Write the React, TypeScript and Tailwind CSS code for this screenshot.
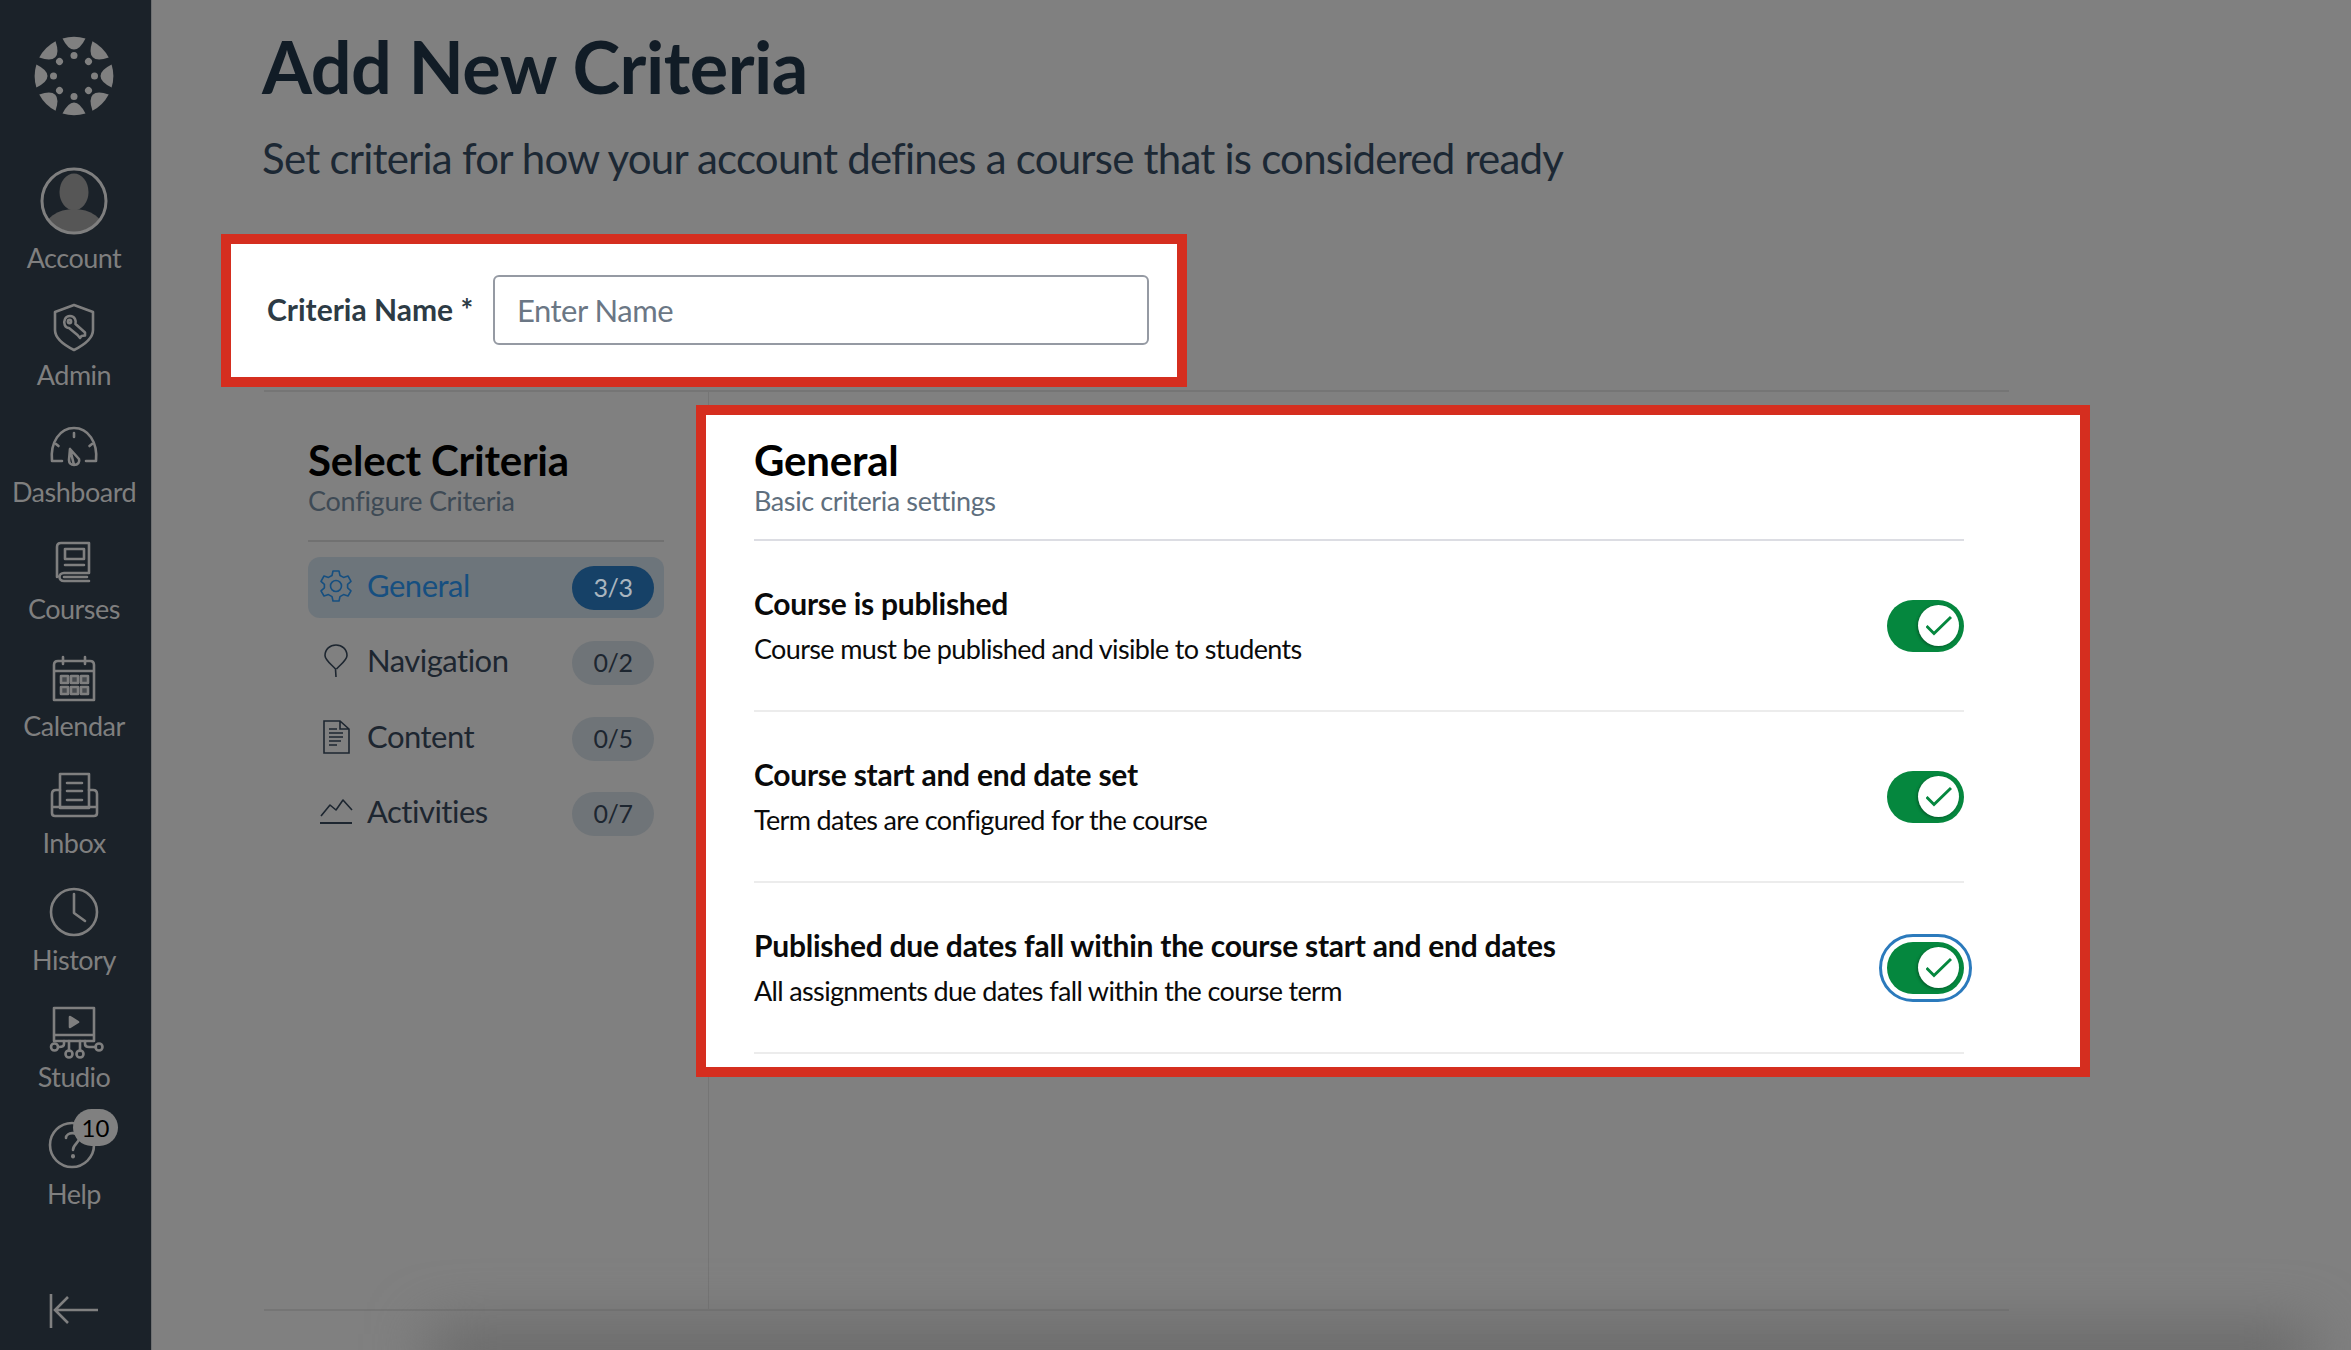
import type { ReactNode } from "react";

const Icon = ({ children, size = 64 }: { children: ReactNode; size?: number }) => (
  <svg width={size} height={size} viewBox="0 0 64 64" fill="none" stroke="#7f7f7f" strokeWidth="2.6" strokeLinejoin="round" strokeLinecap="round">
    {children}
  </svg>
);

const Logo = () => (
  <svg width="80" height="80" viewBox="-40 -40 80 80" fill="#808080">
    {[0, 45, 90, 135, 180, 225, 270, 315].map((a) => (
      <g key={a} transform={`rotate(${a})`}>
        <path d="M-11.5 -37.6 A 39 39 0 0 1 11.5 -37.6 Q 6 -26.5 0 -26.5 Q -6 -26.5 -11.5 -37.6 Z" />
        <circle cx="0" cy="-20.5" r="3.5" />
      </g>
    ))}
  </svg>
);

const AccountIcon = () => (
  <svg width="68" height="68" viewBox="0 0 68 68" className="-translate-y-[9px]">
    <defs>
      <clipPath id="avatar">
        <circle cx="34" cy="34" r="31" />
      </clipPath>
    </defs>
    <g clipPath="url(#avatar)" fill="#565656">
      <ellipse cx="34" cy="25" rx="14.5" ry="18.5" />
      <ellipse cx="34" cy="63" rx="30" ry="21" />
    </g>
    <circle cx="34" cy="34" r="32" fill="none" stroke="#7f7f7f" strokeWidth="3" />
  </svg>
);

const AdminIcon = () => (
  <Icon>
    <path d="M32 10 L51 17 V35 C51 44 42 50 32 55 C22 50 13 44 13 35 V17 Z" />
    <path d="M23 24 C25 20 31 20 33 24 C34 26 34 27 33.5 29 L43 37.5 L43 40.5 L39.5 41 L38 43 L35.5 40 L27 33 C23 33 21 28 23 24 Z" />
    <circle cx="27.5" cy="26.5" r="1.6" />
  </Icon>
);

const DashboardIcon = () => (
  <Icon>
    <path d="M20 49 H10 C8 30 18 16 32 16 C46 16 56 30 54 49 H44" />
    <path d="M14 32 L16.5 34 M50 32 L47.5 34 M32 21 V25" />
    <path d="M28 37 L32 53 C29 53 27 51 27 48 Z M28 37 L37 47 C38 50 36 53 32 53" />
  </Icon>
);

const CoursesIcon = () => (
  <Icon>
    <path d="M19 14 H47 V44 H22 C16 44 16 52 22 52 H47 M19 14 C16 14 15 16 15 18 V48" />
    <path d="M23 20 H42 V30 H23 Z M23 36 H42 M22 48 H45" />
  </Icon>
);

const CalendarIcon = () => (
  <Icon>
    <path d="M12 54 V19 C12 16 14 15 16 15 H48 C50 15 52 16 52 19 V54 Z M12 25 H52 M21 11 V18 M43 11 V18" />
    <path d="M19 30 H26 V37 H19 Z M29 30 H36 V37 H29 Z M39 30 H46 V37 H39 Z M19 41 H26 V48 H19 Z M29 41 H36 V48 H29 Z M39 41 H46 V48 H39 Z" fill="#7f7f7f" fillOpacity="0.45" />
  </Icon>
);

const InboxIcon = () => (
  <Icon>
    <path d="M18 11 H47 V45 H18 Z M25 20 H40 M25 28 H40 M25 37 H40" />
    <path d="M18 27 H14 C11 27 10 29 10 31 V50 C10 52 11 53 13 53 H52 C54 53 55 52 55 50 V31 C55 29 54 27 51 27 H47 M10 44 H55" />
  </Icon>
);

const HistoryIcon = () => (
  <Icon>
    <circle cx="32" cy="32" r="23" />
    <path d="M32 14 V33 L43 41" />
  </Icon>
);

const StudioIcon = () => (
  <Icon>
    <path d="M12 11 H52 V44 H12 Z M12 38 H52" />
    <path d="M28 20 L36 25 L28 30 Z" fill="#7f7f7f" />
    <path d="M22 44 V47 C22 49 20 50 17 50 M54 50 H47 C44 50 43 49 43 47 V44 M27 44 V54 M38 44 V54" />
    <circle cx="12.5" cy="50" r="3.5" />
    <circle cx="57" cy="50" r="3.5" />
    <circle cx="27" cy="57" r="3.5" />
    <circle cx="38" cy="57" r="3.5" />
  </Icon>
);

const HelpIcon = () => (
  <Icon>
    <circle cx="30" cy="31" r="22" />
    <path d="M24 24 C24 18 36 17 37 24 C37.5 29 31 30 31 36" />
    <path d="M31 42 V42.5" strokeWidth="4" />
  </Icon>
);

const GearIcon = () => (
  <svg width="34" height="34" viewBox="0 0 34 34" fill="none" stroke="#164f80" strokeWidth="1.6" strokeLinejoin="round">
    <path d="M14 2 H20 L21 6.5 L24.5 8.4 L29 7 L32 12.3 L28.6 15.3 V18.8 L32 21.8 L29 27 L24.5 25.6 L21 27.6 L20 32 H14 L13 27.6 L9.5 25.6 L5 27 L2 21.8 L5.4 18.8 V15.3 L2 12.3 L5 7 L9.5 8.4 L13 6.5 Z" />
    <circle cx="17" cy="17" r="5.5" />
  </svg>
);

const PinIcon = () => (
  <svg width="34" height="34" viewBox="0 0 34 34" fill="none" stroke="#1d2630" strokeWidth="1.6">
    <path d="M17 33 L16.5 25 C12 20 6 16 6 11.5 C6 5 11 1 17 1 C23 1 28 5 28 11.5 C28 16 22 20 17.5 25" strokeLinejoin="round" />
  </svg>
);

const DocIcon = () => (
  <svg width="34" height="34" viewBox="0 0 34 34" fill="none" stroke="#1d2630" strokeWidth="1.6">
    <path d="M5 1 H21 L30 9 V33 H5 Z M21 1 V9 H30" />
    <path d="M10 9 H18 M10 13 H24 M10 17 H24 M10 21 H22 M10 25 H18" strokeWidth="1.3" />
  </svg>
);

const ChartIcon = () => (
  <svg width="34" height="34" viewBox="0 0 34 34" fill="none" stroke="#1d2630" strokeWidth="1.6">
    <path d="M2 21 L11 10 L17 15 L24 5 L33 15" strokeLinejoin="round" />
    <path d="M1 28 H33" strokeWidth="2" />
  </svg>
);

const Toggle = ({ focused }: { focused?: boolean }) => (
  <div className={focused ? "-m-[8px] rounded-full border-[3px] border-[#2b7abc] p-[5px]" : ""}>
    <div className="relative flex h-[52px] w-[77px] items-center justify-end rounded-full bg-[#05873e] pr-[5px]">
      <div className="flex h-[41px] w-[41px] items-center justify-center rounded-full bg-white shadow-[-1px_1px_3px_rgba(0,0,0,0.35)]">
        <svg width="26" height="26" viewBox="0 0 26 26" fill="none" stroke="#05873e" strokeWidth="3">
          <path d="M0.5 13 L8 20.5 L25 4" />
        </svg>
      </div>
    </div>
  </div>
);

const navItems = [
  { label: "Account", icon: <AccountIcon /> },
  { label: "Admin", icon: <AdminIcon /> },
  { label: "Dashboard", icon: <DashboardIcon /> },
  { label: "Courses", icon: <CoursesIcon /> },
  { label: "Calendar", icon: <CalendarIcon /> },
  { label: "Inbox", icon: <InboxIcon /> },
  { label: "History", icon: <HistoryIcon /> },
  { label: "Studio", icon: <StudioIcon /> },
  { label: "Help", icon: <HelpIcon />, badge: "10" },
];

const criteriaGroups = [
  { label: "General", count: "3/3", icon: <GearIcon />, active: true },
  { label: "Navigation", count: "0/2", icon: <PinIcon /> },
  { label: "Content", count: "0/5", icon: <DocIcon /> },
  { label: "Activities", count: "0/7", icon: <ChartIcon /> },
];

const rules = [
  { title: "Course is published", text: "Course must be published and visible to students" },
  { title: "Course start and end date set", text: "Term dates are configured for the course" },
  { title: "Published due dates fall within the course start and end dates", text: "All assignments due dates fall within the course term", focused: true },
];

export default function App() {
  return (
    <div className="relative flex h-[1350px] w-full overflow-hidden bg-[#808080] font-['Lato','Open_Sans',sans-serif]">
      {/* Sidebar */}
      <aside className="flex w-[152px] shrink-0 flex-col items-center border-r border-[#6d6f71] bg-[#1b2229] pr-[3px]">
        <div className="flex h-[178px] shrink-0 items-start pt-[36px]">
          <Logo />
        </div>
        {navItems.map((item) => (
          <div key={item.label} className="relative flex h-[117px] w-full shrink-0 flex-col items-center">
            <div className="flex h-[64px] items-center justify-center">{item.icon}</div>
            <span className="text-[27px] leading-[32px] tracking-[-0.5px] text-[#7f7f7f]">{item.label}</span>
            {item.badge && (
              <span className="absolute left-[73px] top-[-5px] flex h-[37px] w-[45px] items-center justify-center rounded-full bg-[#808080] text-[24px] text-black">
                {item.badge}
              </span>
            )}
          </div>
        ))}
        <div className="mt-[62px]">
          <svg width="52" height="36" viewBox="0 0 52 36" fill="none" stroke="#808080" strokeWidth="2.6">
            <path d="M3 1 V35 M50 17 H7 M20 4 L7 17 L20 30" />
          </svg>
        </div>
      </aside>

      {/* Main */}
      <main className="flex min-w-0 flex-1 flex-col pl-[110px]">
        <h1 className="mt-[20px] text-[72px] font-bold leading-[92px] tracking-[-0.5px] text-[#111c26]">Add New Criteria</h1>
        <p className="mt-[21px] text-[42px] leading-[50px] tracking-[-0.78px] text-[#1c2834]">
          Set criteria for how your account defines a course that is considered ready
        </p>

        <div className="-ml-[41px] mt-[51px] flex h-[153px] w-[966px] items-center justify-between border-[10px] border-[#d52e1f] bg-white pb-[2px] pl-[36px] pr-[28px]">
          <label className="text-[30px] font-bold text-[#2d3b45]">Criteria Name *</label>
          <input
            placeholder="Enter Name"
            className="h-[70px] w-[656px] rounded-[6px] border-2 border-[#959aa3] bg-white px-[22px] text-[31px] tracking-[-0.5px] text-[#2d3b45] placeholder:text-[#6b7785]"
          />
        </div>

        <div className="ml-[2px] mt-[3px] flex h-[921px] w-[1745px] border-y-2 border-[#757575]">
          {/* Criteria groups */}
          <div className="w-[445px] shrink-0 border-r border-[#757575] pl-[44px] pr-[44px] pt-[43px]">
            <div className="border-b-2 border-[#717171] pb-[23px]">
              <h2 className="text-[42px] font-bold leading-[50px] tracking-[-0.2px] text-black">Select Criteria</h2>
              <p className="text-[27px] leading-[32px] tracking-[-0.25px] text-[#3e4a55]">Configure Criteria</p>
            </div>
            <ul className="mt-[15px] flex flex-col gap-[14.5px]">
              {criteriaGroups.map((g) => (
                <li
                  key={g.label}
                  className={`flex h-[61px] items-center rounded-[12px] pl-[10px] pr-[10px] ${g.active ? "bg-[#6d757b]" : ""}`}
                >
                  <span className="flex w-[36px] justify-center pb-[4px]">{g.icon}</span>
                  <span className={`ml-[13px] flex-1 pb-[5px] text-[31px] tracking-[-0.5px] ${g.active ? "text-[#164f80]" : "text-[#1d2630]"}`}>{g.label}</span>
                  <span
                    className={`flex h-[44px] w-[82px] items-center justify-center rounded-full text-[25px] tracking-[-0.5px] ${g.active ? "bg-[#164167] text-[#a9b5bf]" : "bg-[#6f7478] text-[#1d2630]"}`}
                  >
                    {g.count}
                  </span>
                </li>
              ))}
            </ul>
          </div>

          {/* Selected group settings */}
          <section className="-ml-[13px] mt-[13px] h-[672px] w-[1394px] shrink-0 border-[10px] border-[#d52e1f] bg-white pl-[48px] pr-[116px]">
            <div className="flex h-[126px] flex-col justify-end border-b-2 border-[#dcdde3] pb-[22px]">
              <h2 className="text-[42px] font-bold leading-[50px] tracking-[-0.2px] text-black">General</h2>
              <p className="text-[27px] leading-[32px] tracking-[-0.4px] text-[#5f6f7e]">Basic criteria settings</p>
            </div>
            {rules.map((r) => (
              <div key={r.title} className="flex h-[171px] items-center justify-between border-b-2 border-[#ececec]">
                <div className="pb-[2px]">
                  <h3 className="text-[30px] font-bold leading-[40px] tracking-[-0.24px] text-[#0a0a0a]">{r.title}</h3>
                  <p className="mt-[8px] text-[27px] leading-[36px] tracking-[-0.65px] text-[#0a0a0a]">{r.text}</p>
                </div>
                <Toggle focused={r.focused} />
              </div>
            ))}
          </section>
        </div>
      </main>

      {/* bottom shadow over the dimmed page */}
      <div className="pointer-events-none absolute bottom-[-30px] left-[430px] right-[40px] h-[50px] bg-[#646464] blur-[30px]" />
    </div>
  );
}
